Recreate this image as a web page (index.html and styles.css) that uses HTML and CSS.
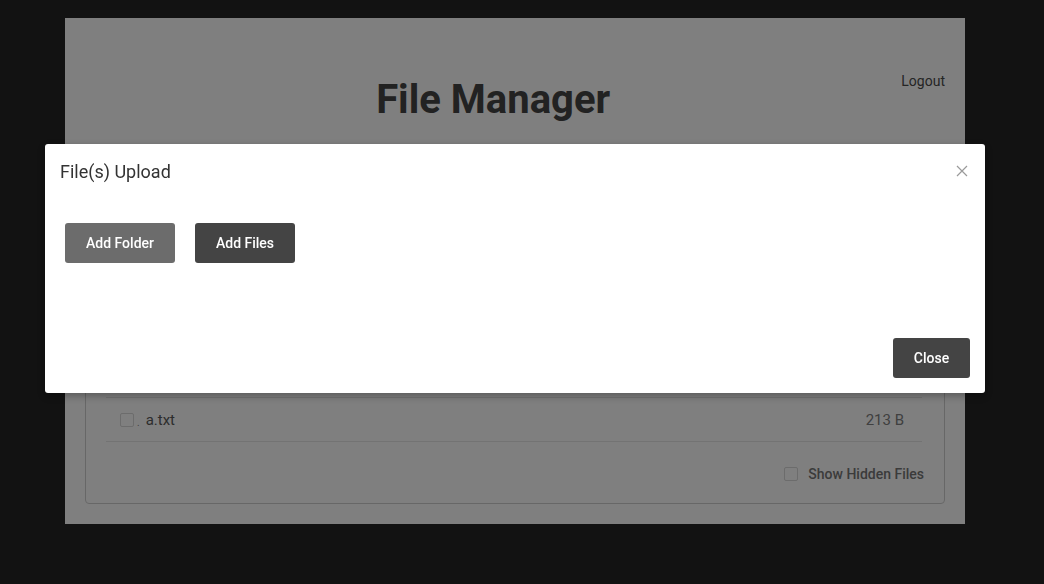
FILE: index.html
```html
<!DOCTYPE html>
<html>
<head>
<meta charset="utf-8">
<link rel="stylesheet" href="styles.css">
</head>
<body>
<div class="page">
  <header class="header">
    <h1 class="title">File Manager</h1>
    <a class="logout">Logout</a>
  </header>
  <section class="card">
    <div class="toolbar"></div>
    <div class="crumbs"></div>
    <div class="row head"><span class="cb"></span><span class="name">Name</span><span class="size">Size</span></div>
    <div class="row"><span class="cb"></span><span class="name">docs</span><span class="size">-</span></div>
    <div class="row"><span class="cb"></span><span class="name">images</span><span class="size">-</span></div>
    <div class="row"><span class="cb"></span><span class="dot">.</span><span class="name">a.txt</span><span class="size">213 B</span></div>
    <div class="footer">
      <label class="hidden-toggle"><span class="cb"></span><span>Show Hidden Files</span></label>
    </div>
  </section>
</div>

<div class="overlay">
  <div class="modal">
    <div class="modal-head">
      <span class="modal-title">File(s) Upload</span>
      <svg class="x" width="12" height="12" viewBox="0 0 12 12"><path d="M1 1L11 11M11 1L1 11" stroke="#9a9a9a" stroke-width="1.2" fill="none"/></svg>
    </div>
    <div class="modal-body">
      <button class="btn btn-light">Add Folder</button>
      <button class="btn btn-dark">Add Files</button>
    </div>
    <div class="modal-foot">
      <button class="btn btn-dark close">Close</button>
    </div>
  </div>
</div>
</body>
</html>
```

FILE: styles.css
```css
* { box-sizing: border-box; }
html, body { margin: 0; padding: 0; }
body {
  background: #242424;
  font-family: Roboto, "Liberation Sans", sans-serif;
  color: #4a4a4a;
  width: 1044px;
  height: 584px;
  overflow: hidden;
}
.page {
  width: 900px;
  margin: 18px 0 0 65px;
  background: #fff;
  padding: 0 20px 20px;
}
.header {
  display: flex;
  align-items: flex-start;
  padding-top: 59px;
  padding-bottom: 37px;
}
.title {
  flex: 1;
  margin: 0;
  text-align: center;
  font-size: 40px;
  line-height: 46px;
  font-weight: 700;
  color: #444;
}
.logout {
  margin-top: -6px;
  font-size: 14px;
  line-height: 20px;
  color: #4a4a4a;
}
.card {
  border: 1px solid #cfcfcf;
  border-radius: 4px;
  padding: 0 22px 0 20px;
}
.toolbar { height: 61px; }
.crumbs { height: 44px; }
.row {
  display: flex;
  align-items: center;
  height: 44px;
  border-bottom: 1px solid #e6e6e6;
  padding: 0 18px 0 14px;
  font-size: 15px;
  color: #5a5a5a;
}
.row.head { font-weight: 500; }
.cb {
  width: 14px;
  height: 14px;
  border: 1px solid #d8d8d8;
  border-radius: 2px;
  background: #fff;
  flex: none;
}
.dot {
  font-size: 10px;
  color: #888;
  margin-left: 3px;
  margin-top: 6px;
}
.row .name { margin-left: 12px; flex: 1; }
.row .dot + .name { margin-left: 6px; }
.row .size { color: #808080; font-size: 15px; }
.footer {
  display: flex;
  justify-content: flex-end;
  padding: 22px 0 19px;
  margin-right: -2px;
}
.hidden-toggle {
  display: flex;
  align-items: center;
  gap: 10px;
  font-size: 14px;
  line-height: 20px;
  font-weight: 500;
  color: #777;
}
.overlay {
  position: fixed;
  inset: 0;
  background: rgba(0, 0, 0, 0.5);
}
.modal {
  position: absolute;
  left: 45px;
  top: 144px;
  width: 940px;
  background: #fff;
  border-radius: 3px;
  box-shadow: 0 3px 9px rgba(0,0,0,0.3);
}
.modal-head {
  display: flex;
  justify-content: space-between;
  align-items: center;
  padding: 15px 17px 15px 15px;
  height: 56px;
}
.modal-head .x { margin-top: -3px; }
.modal-title {
  font-size: 18px;
  line-height: 26px;
  color: #333;
}
.modal-body {
  display: flex;
  gap: 20px;
  padding: 23px 20px 60px;
}
.btn {
  height: 40px;
  border: 0;
  border-radius: 3px;
  color: #fff;
  font: 500 14px Roboto, sans-serif;
  padding: 0;
}
.btn-light { background: #6c6c6c; width: 110px; }
.btn-dark { background: #444; width: 100px; }
.modal-foot {
  display: flex;
  justify-content: flex-end;
  padding: 15px;
}
.close { width: 77px; }
```
